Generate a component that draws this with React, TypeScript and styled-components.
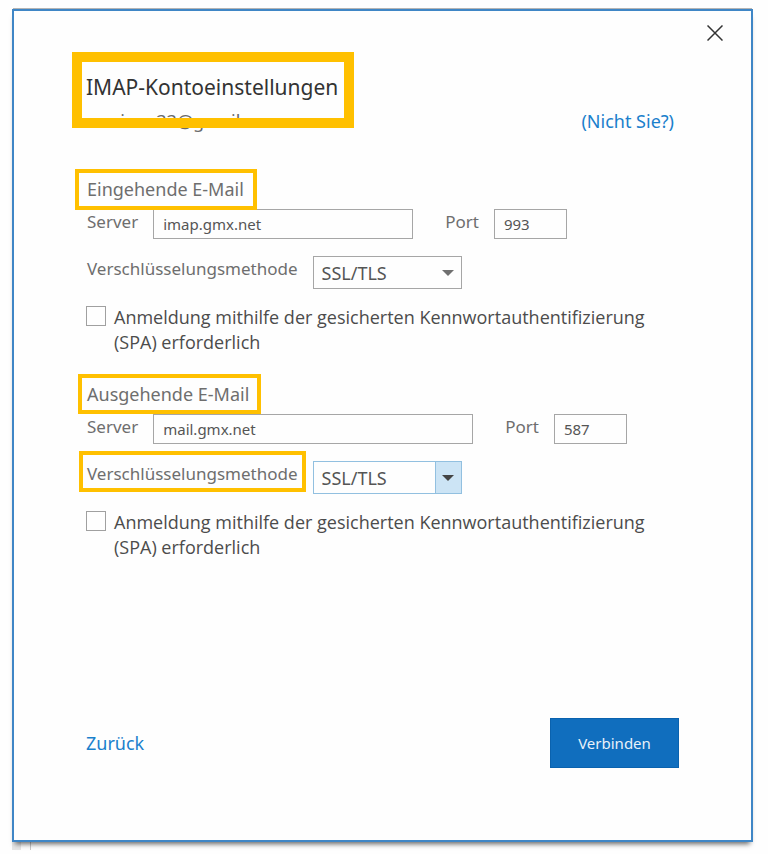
import React from "react";
import styled, { createGlobalStyle, css } from "styled-components";

const GlobalStyle = createGlobalStyle`
  *, *::before, *::after { box-sizing: border-box; }
  html, body { margin: 0; background: #fefefe; }
  body, button, input, select {
    font-family: "Noto Sans", "Open Sans", sans-serif;
  }
`;

const Page = styled.div`
  min-height: 100vh;
  padding: 9px 15px 12px 12px;
  display: flex;
  background:
    linear-gradient(90deg, #e6e6e6 9px, #fefefe 9px, #fefefe 18px, #c8c8c8 18px, #c8c8c8 19px, transparent 19px)
    12px calc(100% - 4px) / 30px 12px no-repeat;
`;

const Dialog = styled.main`
  flex: 1;
  display: flex;
  flex-direction: column;
  background: #fefefe;
  border: 2px solid #3f86c6;
  box-shadow: 0 -2px 0 -1px #b4b4b4, 0 5px 5px -3px rgba(0, 0, 0, 0.6);
`;

const TitleBar = styled.div`
  display: flex;
  justify-content: flex-end;
  padding: 12px 26px 0 0;
`;

const CloseButton = styled.button`
  display: flex;
  padding: 2px;
  border: 0;
  background: none;
  color: #333;
`;

const Content = styled.form`
  flex: 1;
  display: flex;
  flex-direction: column;
  padding: 28px 72px 72px 72px;
`;

const Header = styled.header`
  display: flex;
  flex-direction: column;
`;

const mark = (border: number, inset: string) => css`
  position: relative;
  &::after {
    content: "";
    position: absolute;
    inset: ${inset};
    border: ${border}px solid #ffc000;
    pointer-events: none;
    z-index: 1;
  }
`;

const Title = styled.h1`
  margin: 0;
  align-self: flex-start;
  font-size: 21px;
  line-height: 32px;
  font-weight: 400;
  color: #333;
  ${mark(10, "-19px -16px -25px -14px")}
`;

const AccountLine = styled.div`
  display: flex;
  justify-content: space-between;
  padding: 5px 5px 0 0;
  font-size: 18px;
  line-height: 26px;
  color: #6a6a6a;
`;

const Link = styled.a`
  color: #1a80cc;
  text-decoration: none;
`;

const Section = styled.section`
  display: flex;
  flex-direction: column;
  margin-top: 41px;

  & + & { margin-top: 25px; }
`;

const SectionTitle = styled.h2<{ $active?: boolean }>`
  margin: 0 0 6px 1px;
  align-self: flex-start;
  font-size: 18px;
  line-height: 28px;
  font-weight: 400;
  color: #6e6e6e;
  ${(p) => mark(4, p.$active ? "-6px -12px -6px -9px" : "-6px -13px -7px -12px")}
`;

const Row = styled.div`
  display: flex;
  align-items: flex-start;
  margin: 0 0 17px 1px;
`;

const MethodRow = styled(Row)`
  margin-bottom: 16px;
`;

const Label = styled.label<{ $marked?: boolean }>`
  font-size: 17px;
  line-height: 26px;
  color: #6e6e6e;
  margin-right: 15px;
  ${(p) => p.$marked && mark(4, "-10px -8px -5px -8px")}
`;

const TextInput = styled.input<{ $width: number }>`
  width: ${(p) => p.$width}px;
  height: 30px;
  margin-right: 32px;
  padding: 0 9px;
  border: 1px solid #a6a6a6;
  background: #fefefe;
  font-size: 15px;
  color: #555;
`;

const SelectBox = styled.span<{ $active?: boolean }>`
  display: grid;
  grid-template-columns: 1fr 26px;
  width: 149px;
  height: 33px;
  border: 1px solid ${(p) => (p.$active ? "#92c0e0" : "#a6a6a6")};
`;

const Select = styled.select`
  grid-area: 1 / 1 / 2 / 3;
  appearance: none;
  padding: 0 8px;
  border: 0;
  background: none;
  font-size: 18px;
  color: #555;
`;

const ArrowCell = styled.span<{ $active?: boolean }>`
  grid-area: 1 / 2;
  display: flex;
  align-items: center;
  justify-content: center;
  pointer-events: none;
  color: ${(p) => (p.$active ? "#444" : "#707070")};
  background: ${(p) => (p.$active ? "#cce4f5" : "transparent")};
  border-left: 1px solid ${(p) => (p.$active ? "#92c0e0" : "transparent")};
`;

const CheckLabel = styled.label`
  display: flex;
  gap: 8px;
  font-family: "Open Sans", "Noto Sans", sans-serif;
  font-size: 18px;
  line-height: 25px;
  color: #4c4c4c;
`;

const Checkbox = styled.input`
  appearance: none;
  flex: none;
  width: 20px;
  height: 20px;
  margin: 1px 0 0 0;
  border: 1px solid #a0a0a0;
  background: #fefefe;
`;

const Footer = styled.footer`
  display: flex;
  justify-content: space-between;
  align-items: center;
  margin-top: auto;
  font-size: 18px;
`;

const ConnectButton = styled.button`
  width: 129px;
  height: 50px;
  border: 1px solid #0a62ae;
  background: #106ebe;
  color: #e8f1f9;
  font-size: 15px;
`;

const Arrow = () => (
  <svg width="12" height="6" viewBox="0 0 12 6" aria-hidden="true">
    <path d="M0 0h12L6 6z" fill="currentColor" />
  </svg>
);

type ServerProps = {
  id: string;
  title: string;
  server: string;
  port: string;
  width: number;
  active?: boolean;
};

const ServerSection = ({ id, title, server, port, width, active }: ServerProps) => (
  <Section>
    <SectionTitle $active={active}>{title}</SectionTitle>
    <Row>
      <Label htmlFor={`${id}-server`}>Server</Label>
      <TextInput id={`${id}-server`} defaultValue={server} $width={width} />
      <Label htmlFor={`${id}-port`}>Port</Label>
      <TextInput id={`${id}-port`} defaultValue={port} $width={73} />
    </Row>
    <MethodRow>
      <Label htmlFor={`${id}-method`} $marked={active}>Verschlüsselungsmethode</Label>
      <SelectBox $active={active}>
        <ArrowCell $active={active}><Arrow /></ArrowCell>
        <Select id={`${id}-method`} defaultValue="SSL/TLS">
          <option>SSL/TLS</option>
        </Select>
      </SelectBox>
    </MethodRow>
    <CheckLabel>
      <Checkbox type="checkbox" />
      <span>Anmeldung mithilfe der gesicherten Kennwortauthentifizierung (SPA) erforderlich</span>
    </CheckLabel>
  </Section>
);

export default function App() {
  return (
    <>
      <GlobalStyle />
      <Page>
        <Dialog>
          <TitleBar>
            <CloseButton type="button" aria-label="Schließen">
              <svg width="16" height="16" viewBox="0 0 16 16" fill="none" stroke="currentColor" strokeWidth="1.5" aria-hidden="true">
                <path d="M0.5 0.5l15 15M15.5 0.5l-15 15" />
              </svg>
            </CloseButton>
          </TitleBar>
          <Content onSubmit={(e) => e.preventDefault()}>
            <Header>
              <Title>IMAP-Kontoeinstellungen</Title>
              <AccountLine>
                <span>mariana33@gmail.com</span>
                <Link href="#">(Nicht Sie?)</Link>
              </AccountLine>
            </Header>
            <ServerSection id="in" title="Eingehende E-Mail" server="imap.gmx.net" port="993" width={260} />
            <ServerSection id="out" title="Ausgehende E-Mail" server="mail.gmx.net" port="587" width={320} active />
            <Footer>
              <Link href="#">Zurück</Link>
              <ConnectButton type="submit">Verbinden</ConnectButton>
            </Footer>
          </Content>
        </Dialog>
      </Page>
    </>
  );
}
